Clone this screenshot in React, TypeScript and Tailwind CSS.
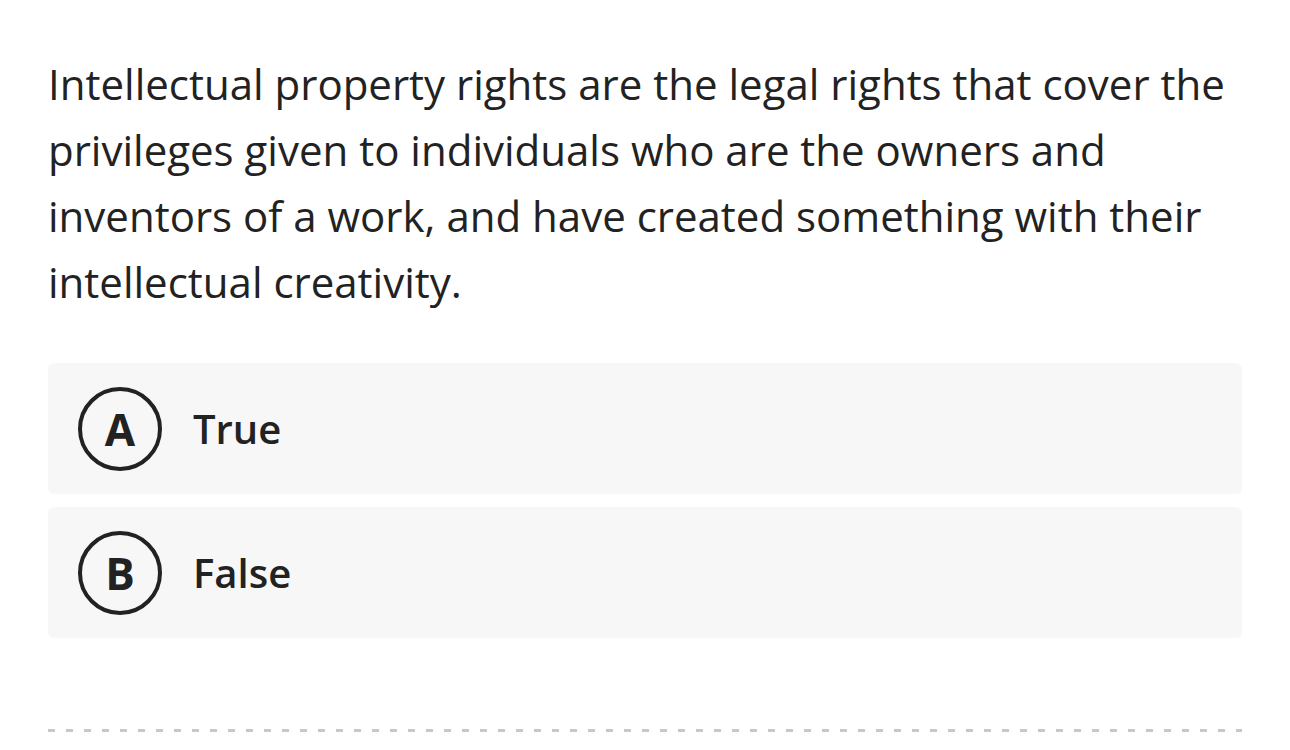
import React from 'react';

type OptionProps = Readonly<{
	letter: string;
	label: string;
}>;

const Option = ({ letter, label }: OptionProps) => {
	return (
		<div className="flex items-center h-[131px] rounded-md bg-[#f7f7f7] pl-[30px]">
			<div className="flex items-center justify-center w-[84px] h-[84px] rounded-full border-[4px] border-[#222] text-[44px] font-bold text-[#222] leading-none">
				{letter}
			</div>
			<span className="ml-[31px] text-[40px] font-semibold text-[#222]">{label}</span>
		</div>
	);
};

export default function App() {
	return (
		<div className="w-[1290px] h-[750px] bg-white px-12 pt-[51px] font-['Open_Sans',sans-serif] overflow-hidden">
			<p className="text-[42px] leading-[66px] text-[#222]">
				Intellectual property rights are the legal rights that cover the privileges given to
				individuals who are the owners and inventors of a work, and have created something
				with their intellectual creativity.
			</p>
			<div className="flex flex-col gap-[13px] mt-[48px]">
				<Option letter="A" label="True" />
				<Option letter="B" label="False" />
			</div>
			<div className="mt-[91px] h-[3px] bg-[linear-gradient(to_right,#c8c8c8_0_7px,transparent_7px_18px)] bg-[length:18px_3px]" />
		</div>
	);
}
